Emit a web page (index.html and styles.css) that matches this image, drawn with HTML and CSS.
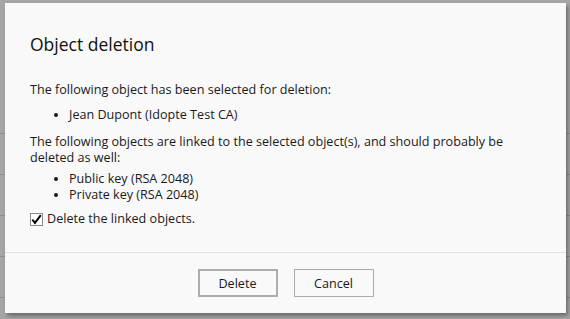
FILE: index.html
```html
<!DOCTYPE html>
<html>
<head>
<meta charset="utf-8">
<link rel="stylesheet" href="styles.css">
</head>
<body>
<div class="backdrop">
  <div class="dialog">
    <div class="content">
      <h1 class="title">Object deletion</h1>
      <p class="para">The following object has been selected for deletion:</p>
      <ul class="list list-first">
        <li>Jean Dupont (Idopte Test CA)</li>
      </ul>
      <p class="para">The following objects are linked to the selected object(s), and should probably be deleted as well:</p>
      <ul class="list list-second">
        <li>Public key (RSA 2048)</li>
        <li>Private key (RSA 2048)</li>
      </ul>
      <label class="check">
        <span class="box"><svg width="11" height="11" viewBox="0 0 11 11"><path d="M1.3 5.6 L4 8.8 L9.8 1.2" fill="none" stroke="#000" stroke-width="2"/></svg></span>
        <span>Delete the linked objects.</span>
      </label>
    </div>
    <div class="footer">
      <button class="btn btn-default">Delete</button>
      <button class="btn">Cancel</button>
    </div>
  </div>
</div>
</body>
</html>
```
FILE: styles.css
```css
html, body {
  margin: 0;
  padding: 0;
}
body {
  width: 570px;
  height: 319px;
  overflow: hidden;
  background: #a6a6a6;
  font-family: "Open Sans", "Noto Sans", sans-serif;
  color: #1a1a1a;
}
.backdrop {
  width: 570px;
  height: 319px;
  box-sizing: border-box;
  padding: 3px 5px 0 5px;
  background:
    repeating-linear-gradient(to bottom, transparent 0, transparent 40px, #8f8f8f 40px, #8f8f8f 41px) 0 93px / 100% 100% no-repeat,
    #a6a6a6;
}
.dialog {
  width: 561px;
  height: 310px;
  background: #f9f9f9;
  box-shadow: 2px 3px 4px rgba(0,0,0,0.35);
  display: flex;
  flex-direction: column;
}
.content {
  flex: 1;
  padding: 29px 25px 0 25px;
}
.title {
  margin: 0 0 26px 0;
  font-size: 17.5px;
  font-weight: 400;
  line-height: 24px;
  color: #111;
}
.para {
  margin: 0;
  font-size: 12.6px;
  line-height: 16px;
}
.list {
  padding: 0 0 0 39px;
  font-size: 12.6px;
  line-height: 16px;
}
.list-first {
  margin: 9px 0 11px 0;
}
.list-second {
  margin: 5px 0 8px 0;
}
.check {
  display: flex;
  align-items: center;
  font-size: 12.6px;
  line-height: 16px;
}
.box {
  width: 11px;
  height: 11px;
  border: 1px solid #8a8a8a;
  background: #fff;
  margin-right: 4px;
  display: flex;
}
.footer {
  height: 61px;
  border-top: 1px solid #e2e2e2;
  display: flex;
  justify-content: center;
  align-items: flex-start;
  gap: 16px;
  padding-top: 16px;
  box-sizing: border-box;
}
.btn {
  width: 80px;
  height: 28px;
  border: 1px solid #adadad;
  background: #f9f9f9;
  font-family: "Open Sans", "Noto Sans", sans-serif;
  font-size: 12.6px;
  color: #1a1a1a;
  padding: 0;
}
.btn-default {
  border: 2px solid #adadad;
}
```
